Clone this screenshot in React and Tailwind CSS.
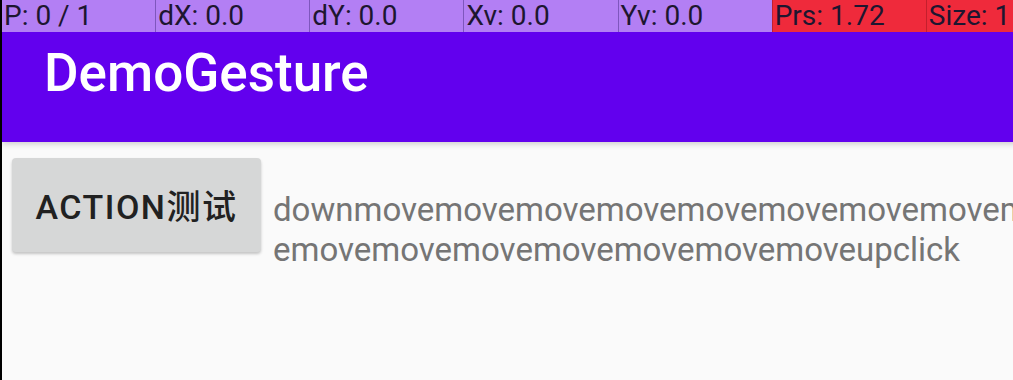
import React from 'react'

const cells = [
  { label: 'P: 0 / 1', red: false },
  { label: 'dX: 0.0', red: false },
  { label: 'dY: 0.0', red: false },
  { label: 'Xv: 0.0', red: false },
  { label: 'Yv: 0.0', red: false },
  { label: 'Prs: 1.72', red: true },
  { label: 'Size: 1', red: true },
]

const log = 'down' + 'move'.repeat(16) + 'upclick'

export default function App() {
  return (
    <div className="h-[380px] w-[1013px] overflow-hidden bg-[#fafafa]" style={{ fontFamily: 'Roboto, "Noto Sans CJK SC", sans-serif' }}>
      <div className="relative h-[380px] w-[1080px] border-l-2 border-black">
        {/* pointer location overlay */}
        <div className="absolute left-0 top-0 z-10 flex h-[32px] w-full">
          {cells.map((c, i) => (
            <div
              key={c.label}
              className={`h-[32px] flex-1 overflow-hidden whitespace-nowrap pl-[2px] text-[28px] leading-[32px] text-[#1d1630] ${c.red ? 'bg-[#ef2a3b]' : 'bg-[#b37ff4]'} ${i > 0 ? (c.red ? 'border-l border-[#c41f2d]' : 'border-l border-[#7e56bd]') : ''}`}
            >
              {c.label}
            </div>
          ))}
        </div>

        <header className="relative flex h-[142px] items-end bg-[#6200ee] pb-[42px] pl-[42px] shadow-[0_2px_6px_rgba(0,0,0,0.18)]">
          <span className="text-[53px] font-medium leading-none text-white">DemoGesture</span>
        </header>

        <main className="flex items-start pl-[10px] pt-[16px]">
          <button className="flex h-[94px] w-[249px] shrink-0 items-center justify-center rounded-[4px] bg-[#d6d7d7] pt-[4px] text-[34px] font-medium tracking-[0.045em] text-[#212121] shadow-[0_2px_3px_rgba(0,0,0,0.22)]">
            ACTION测试
          </button>
          <div className="ml-[12px] mt-[32px] w-[792px] break-all text-[33px] leading-[40px] text-[#757575]">
            {log}
          </div>
        </main>
      </div>
    </div>
  )
}
